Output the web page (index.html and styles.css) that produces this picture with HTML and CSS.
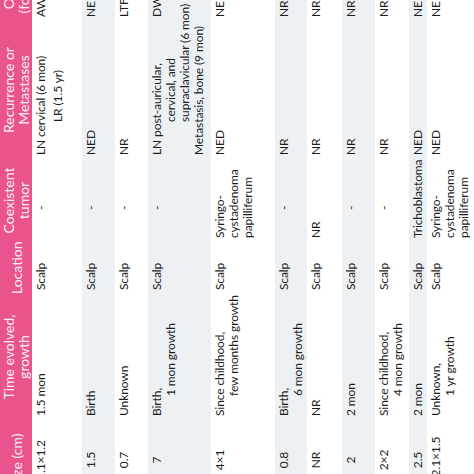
FILE: index.html
```html
<!DOCTYPE html>
<html>
<head>
<meta charset="utf-8">
<link rel="stylesheet" href="styles.css">
</head>
<body>
<div class="stage">
  <table class="tbl">
    <colgroup>
      <col class="c-size"><col class="c-time"><col class="c-loc"><col class="c-coex"><col class="c-rec"><col class="c-out">
    </colgroup>
    <thead>
      <tr class="hd">
        <th>Size (cm)</th>
        <th>Time evolved,<br>growth</th>
        <th>Location</th>
        <th>Coexistent<br>tumor</th>
        <th>Recurrence or<br>Metastases</th>
        <th>Outcome<br>(follow-up)</th>
      </tr>
    </thead>
    <tbody>
      <tr class="r1">
        <td class="sz">2.1×1.2</td>
        <td>1.5 mon</td>
        <td>Scalp</td>
        <td class="dash">-</td>
        <td><span class="l">LN cervical (6 mon)</span><span class="l ind gap">LR (1.5 yr)</span></td>
        <td>AWD</td>
      </tr>
      <tr class="r2 alt">
        <td class="sz">1.5</td>
        <td>Birth</td>
        <td>Scalp</td>
        <td class="dash">-</td>
        <td>NED</td>
        <td>NED</td>
      </tr>
      <tr class="r3">
        <td class="sz">0.7</td>
        <td>Unknown</td>
        <td>Scalp</td>
        <td class="dash">-</td>
        <td>NR</td>
        <td>LTF</td>
      </tr>
      <tr class="r4 alt">
        <td class="sz">7</td>
        <td><span class="l">Birth,</span><span class="l ti">1 mon growth</span></td>
        <td>Scalp</td>
        <td class="dash">-</td>
        <td><span class="l">LN post-auricular,</span><span class="l ind">cervical, and</span><span class="l ind">supraclavicular (6 mon)</span><span class="l">Metastasis, bone (9 mon)</span></td>
        <td>DWD</td>
      </tr>
      <tr class="r5">
        <td class="sz">4×1</td>
        <td><span class="l">Since childhood,</span><span class="l ti">few months growth</span></td>
        <td>Scalp</td>
        <td><span class="l">Syringo-</span><span class="l">cystadenoma</span><span class="l">papilliferum</span></td>
        <td>NED</td>
        <td>NED</td>
      </tr>
      <tr class="r6 alt">
        <td class="sz">0.8</td>
        <td><span class="l">Birth,</span><span class="l ti">6 mon growth</span></td>
        <td>Scalp</td>
        <td class="dash">-</td>
        <td>NR</td>
        <td>NR</td>
      </tr>
      <tr class="r7">
        <td class="sz">NR</td>
        <td>NR</td>
        <td>Scalp</td>
        <td>NR</td>
        <td>NR</td>
        <td>NR</td>
      </tr>
      <tr class="r8 alt">
        <td class="sz">2</td>
        <td>2 mon</td>
        <td>Scalp</td>
        <td class="dash">-</td>
        <td>NR</td>
        <td>NR</td>
      </tr>
      <tr class="r9">
        <td class="sz">2×2</td>
        <td><span class="l">Since childhood,</span><span class="l ti">4 mon growth</span></td>
        <td>Scalp</td>
        <td class="dash">-</td>
        <td>NR</td>
        <td>NR</td>
      </tr>
      <tr class="r10 alt">
        <td class="sz">2.5</td>
        <td>2 mon</td>
        <td>Scalp</td>
        <td>Trichoblastoma</td>
        <td>NED</td>
        <td>NED</td>
      </tr>
      <tr class="r11">
        <td class="sz">≤2.1×1.5</td>
        <td><span class="l">Unknown,</span><span class="l ti">1 yr growth</span></td>
        <td>Scalp</td>
        <td><span class="l">Syringo-</span><span class="l">cystadenoma</span><span class="l">papilliferum</span></td>
        <td>NED</td>
        <td>NED</td>
      </tr>
    </tbody>
  </table>
</div>
</body>
</html>
```
FILE: styles.css
```css
html, body {
  margin: 0;
  padding: 0;
  background: #ffffff;
}

.stage {
  width: 474px;
  height: 474px;
  overflow: hidden;
}

.tbl {
  width: 560px;
  table-layout: fixed;
  border-collapse: collapse;
  border-spacing: 0;
  font-family: Lato, "Liberation Sans", sans-serif;
  color: #1c1c1c;
  transform-origin: 0 0;
  transform: translateY(500px) rotate(-90deg);
}

.c-size { width: 80px; }
.c-time { width: 126px; }
.c-loc { width: 52px; }
.c-coex { width: 83px; }
.c-rec { width: 138px; }
.c-out { width: 81px; }

.hd {
  height: 32px;
  background: #ea548d;
}

.hd th {
  color: #fdeef4;
  font-weight: 400;
  font-size: 14px;
  line-height: 15px;
  text-align: center;
  vertical-align: middle;
  padding: 0;
  white-space: nowrap;
}

td {
  font-size: 12px;
  line-height: 14px;
  letter-spacing: -0.1px;
  vertical-align: top;
  text-align: left;
  padding: 2px 4px 0 4px;
  white-space: nowrap;
}

.alt td {
  background: #eef1f3;
}

.sz {
  text-align: center;
  padding-left: 0;
  padding-right: 0;
}

.dash {
  padding-left: 32px;
}

.l {
  display: block;
}

.ind {
  padding-left: 33px;
}

.gap {
  margin-top: 3px;
}

.ti {
  padding-left: 20px;
}

.r1 { height: 50px; }
.r2 { height: 33px; }
.r3 { height: 33px; }
.r4 { height: 63px; }
.r5 { height: 64px; }
.r6 { height: 32px; }
.r7 { height: 35px; }
.r8 { height: 33px; }
.r9 { height: 34px; }
.r10 { height: 18px; }
.r11 { height: 60px; }
```
